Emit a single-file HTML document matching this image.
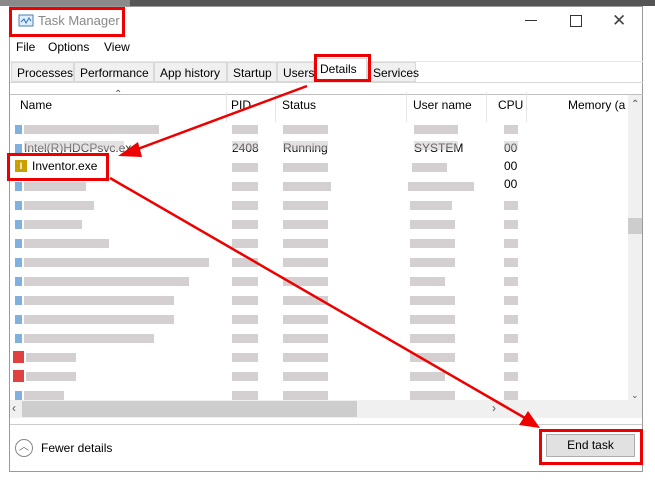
<!DOCTYPE html>
<html><head><meta charset="utf-8"><style>
body{margin:0;width:655px;height:480px;position:relative;overflow:hidden;background:#fff;font-family:"Liberation Sans",sans-serif;font-size:12px;color:#000}
.a{position:absolute}
.win{left:9px;top:6px;width:634px;height:466px;background:#fff;border:1px solid #9a9a9a;box-sizing:border-box}
.tab{position:absolute;top:62px;height:20px;line-height:20px;background:#f0f0f0;border:1px solid #d9d9d9;box-sizing:border-box;padding:0 5px;font-size:12px}
.hdr{position:absolute;top:98px;font-size:12px}
.sep{position:absolute;top:92px;width:1px;height:30px;background:#e5e5e5}
.b{position:absolute;height:9px;background:#c9c4c6;opacity:.8}
.i{position:absolute;width:7px;height:9px;background:#7fb0e0}
.red{position:absolute;border:3px solid #e00;box-sizing:border-box}
</style></head><body>
<div class="a" style="left:0;top:0;width:655px;height:6px;background:#555"></div>
<div class="a" style="left:0;top:0;width:130px;height:6px;background:#8a8a8a"></div>
<div class="a win"></div>
<!-- title -->
<svg class="a" style="left:18px;top:14px" width="16" height="14"><rect x="1" y="1" width="14" height="11" fill="#dfefff" stroke="#4a7fb0"/><polyline points="3,8 6,5 8,9 11,4 13,7" fill="none" stroke="#2a6fc0"/></svg>
<div class="a" style="left:38px;top:13px;font-size:13px;color:#888">Task Manager</div>
<div class="a" style="left:525px;top:20px;width:12px;height:1px;background:#333"></div>
<div class="a" style="left:570px;top:15px;width:10px;height:10px;border:1px solid #333"></div>
<div class="a" style="left:612px;top:11px;font-size:17px;color:#444">✕</div>
<div class="a" style="left:16px;top:40px;font-size:12px">File</div>
<div class="a" style="left:48px;top:40px;font-size:12px">Options</div>
<div class="a" style="left:104px;top:40px;font-size:12px">View</div>
<div class="a" style="left:10px;top:61px;width:633px;height:1px;background:#e8e8e8"></div>
<div class="tab" style="left:11px;width:63px">Processes</div>
<div class="tab" style="left:74px;width:80px">Performance</div>
<div class="tab" style="left:154px;width:73px">App history</div>
<div class="tab" style="left:227px;width:50px">Startup</div>
<div class="tab" style="left:277px;width:37px">Users</div>
<div class="tab" style="left:314px;top:58px;height:25px;background:#fff;width:53px;border-bottom:none">Details</div>
<div class="tab" style="left:367px;width:49px">Services</div>
<div class="a" style="left:10px;top:82px;width:633px;height:1px;background:#d9d9d9"></div>
<div class="a" style="left:10px;top:94px;width:633px;height:1px;background:#bfbfbf"></div>
<div class="a" style="left:114px;top:89px;font-size:10px;color:#555">⌃</div>
<div class="hdr" style="left:20px">Name</div>
<div class="hdr" style="left:231px">PID</div>
<div class="hdr" style="left:282px">Status</div>
<div class="hdr" style="left:413px">User name</div>
<div class="hdr" style="left:498px">CPU</div>
<div class="hdr" style="left:568px">Memory (a</div>
<div class="sep" style="left:226px"></div><div class="sep" style="left:275px"></div><div class="sep" style="left:406px"></div><div class="sep" style="left:486px"></div><div class="sep" style="left:526px"></div>
<!-- scrollbar v -->
<div class="a" style="left:628px;top:95px;width:14px;height:305px;background:#f0f0f0"></div>
<div class="a" style="left:631px;top:99px;font-size:10px;color:#555">⌃</div>
<div class="a" style="left:628px;top:218px;width:14px;height:16px;background:#cdcdcd"></div>
<div class="a" style="left:631px;top:390px;font-size:9px;color:#555">⌄</div>
<!-- rows -->
<div class="i" style="left:15px;top:125px"></div><div class="b" style="left:24px;top:125px;width:135px"></div><div class="b" style="left:232px;top:125px;width:26px"></div><div class="b" style="left:283px;top:125px;width:45px"></div><div class="b" style="left:414px;top:125px;width:44px"></div><div class="b" style="left:504px;top:125px;width:14px"></div>
<div class="i" style="left:15px;top:144px"></div><div class="a" style="left:24px;top:141px;color:#333">Intel(R)HDCPsvc.exe</div><div class="a" style="left:232px;top:141px">2408</div><div class="a" style="left:283px;top:141px">Running</div><div class="a" style="left:414px;top:141px">SYSTEM</div><div class="a" style="left:504px;top:141px">00</div>
<div class="b" style="left:24px;top:141px;width:100px;opacity:.5"></div><div class="b" style="left:232px;top:141px;width:26px;opacity:.5"></div><div class="b" style="left:283px;top:141px;width:45px;opacity:.5"></div><div class="b" style="left:414px;top:141px;width:44px;opacity:.5"></div><div class="b" style="left:504px;top:141px;width:14px;opacity:.5"></div>
<div class="a" style="left:15px;top:160px;width:12px;height:12px;background:#c9a000;color:#fff;font-size:9px;font-weight:bold;text-align:center;line-height:12px">I</div><div class="a" style="left:32px;top:159px;font-size:12px">Inventor.exe</div><div class="b" style="left:232px;top:163px;width:26px"></div><div class="b" style="left:283px;top:163px;width:45px"></div><div class="b" style="left:412px;top:163px;width:35px"></div><div class="a" style="left:504px;top:159px">00</div>
<div class="i" style="left:15px;top:182px"></div><div class="b" style="left:24px;top:182px;width:62px"></div><div class="b" style="left:232px;top:182px;width:26px"></div><div class="b" style="left:283px;top:182px;width:48px"></div><div class="b" style="left:408px;top:182px;width:66px"></div><div class="a" style="left:504px;top:177px">00</div>
<div class="i" style="left:15px;top:201px"></div><div class="b" style="left:24px;top:201px;width:70px"></div><div class="b" style="left:232px;top:201px;width:26px"></div><div class="b" style="left:283px;top:201px;width:45px"></div><div class="b" style="left:410px;top:201px;width:42px"></div><div class="b" style="left:504px;top:201px;width:14px"></div>
<div class="i" style="left:15px;top:220px"></div><div class="b" style="left:24px;top:220px;width:58px"></div><div class="b" style="left:232px;top:220px;width:26px"></div><div class="b" style="left:283px;top:220px;width:45px"></div><div class="b" style="left:410px;top:220px;width:45px"></div><div class="b" style="left:504px;top:220px;width:14px"></div>
<div class="i" style="left:15px;top:239px"></div><div class="b" style="left:24px;top:239px;width:85px"></div><div class="b" style="left:232px;top:239px;width:26px"></div><div class="b" style="left:283px;top:239px;width:45px"></div><div class="b" style="left:410px;top:239px;width:45px"></div><div class="b" style="left:504px;top:239px;width:14px"></div>
<div class="i" style="left:15px;top:258px"></div><div class="b" style="left:24px;top:258px;width:185px"></div><div class="b" style="left:232px;top:258px;width:26px"></div><div class="b" style="left:283px;top:258px;width:45px"></div><div class="b" style="left:410px;top:258px;width:45px"></div><div class="b" style="left:504px;top:258px;width:14px"></div>
<div class="i" style="left:15px;top:277px"></div><div class="b" style="left:24px;top:277px;width:165px"></div><div class="b" style="left:232px;top:277px;width:26px"></div><div class="b" style="left:283px;top:277px;width:45px"></div><div class="b" style="left:410px;top:277px;width:35px"></div><div class="b" style="left:504px;top:277px;width:14px"></div>
<div class="i" style="left:15px;top:296px"></div><div class="b" style="left:24px;top:296px;width:150px"></div><div class="b" style="left:232px;top:296px;width:26px"></div><div class="b" style="left:283px;top:296px;width:45px"></div><div class="b" style="left:410px;top:296px;width:45px"></div><div class="b" style="left:504px;top:296px;width:14px"></div>
<div class="i" style="left:15px;top:315px"></div><div class="b" style="left:24px;top:315px;width:150px"></div><div class="b" style="left:232px;top:315px;width:26px"></div><div class="b" style="left:283px;top:315px;width:45px"></div><div class="b" style="left:410px;top:315px;width:45px"></div><div class="b" style="left:504px;top:315px;width:14px"></div>
<div class="i" style="left:15px;top:334px"></div><div class="b" style="left:24px;top:334px;width:130px"></div><div class="b" style="left:232px;top:334px;width:26px"></div><div class="b" style="left:283px;top:334px;width:45px"></div><div class="b" style="left:410px;top:334px;width:45px"></div><div class="b" style="left:504px;top:334px;width:14px"></div>
<div class="i" style="left:13px;top:351px;width:11px;height:12px;background:#e04040"></div><div class="b" style="left:26px;top:353px;width:50px"></div><div class="b" style="left:232px;top:353px;width:26px"></div><div class="b" style="left:283px;top:353px;width:45px"></div><div class="b" style="left:410px;top:353px;width:45px"></div><div class="b" style="left:504px;top:353px;width:14px"></div>
<div class="i" style="left:13px;top:370px;width:11px;height:12px;background:#e04040"></div><div class="b" style="left:26px;top:372px;width:50px"></div><div class="b" style="left:232px;top:372px;width:26px"></div><div class="b" style="left:283px;top:372px;width:45px"></div><div class="b" style="left:410px;top:372px;width:35px"></div><div class="b" style="left:504px;top:372px;width:14px"></div>
<div class="i" style="left:15px;top:391px"></div><div class="b" style="left:24px;top:391px;width:40px"></div><div class="b" style="left:232px;top:391px;width:26px"></div><div class="b" style="left:283px;top:391px;width:45px"></div><div class="b" style="left:410px;top:391px;width:45px"></div><div class="b" style="left:504px;top:391px;width:14px"></div>
<!-- h scrollbar -->
<div class="a" style="left:10px;top:400px;width:632px;height:18px;background:#f0f0f0"></div>
<div class="a" style="left:12px;top:401px;font-size:12px;color:#555">‹</div>
<div class="a" style="left:22px;top:401px;width:335px;height:16px;background:#cdcdcd"></div>
<div class="a" style="left:492px;top:401px;font-size:12px;color:#555">›</div>
<div class="a" style="left:10px;top:424px;width:632px;height:1px;background:#ccc"></div>
<!-- footer -->
<div class="a" style="left:15px;top:439px;width:16px;height:16px;border:1px solid #888;border-radius:50%;text-align:center;font-size:10px;line-height:16px;color:#666">︿</div>
<div class="a" style="left:41px;top:441px;font-size:12px">Fewer details</div>
<div class="a" style="left:546px;top:434px;width:89px;height:23px;background:#e1e1e1;border:1px solid #adadad;box-sizing:border-box;text-align:center;line-height:21px;font-size:12px">End task</div>
<!-- red highlights -->
<div class="red" style="left:9px;top:7px;width:116px;height:30px"></div>
<div class="red" style="left:314px;top:54px;width:57px;height:28px"></div>
<div class="red" style="left:7px;top:153px;width:102px;height:28px"></div>
<div class="red" style="left:539px;top:429px;width:104px;height:36px"></div>
<svg class="a" style="left:0;top:0" width="655" height="480">
<line x1="307" y1="86" x2="135" y2="150" stroke="#e00" stroke-width="2.5"/>
<polygon points="118,156 138,142 142,157" fill="#e00"/>
<line x1="110" y1="178" x2="525" y2="418" stroke="#e00" stroke-width="2.5"/>
<polygon points="540,428 519,425 528,411" fill="#e00"/>
</svg>
</body></html>
